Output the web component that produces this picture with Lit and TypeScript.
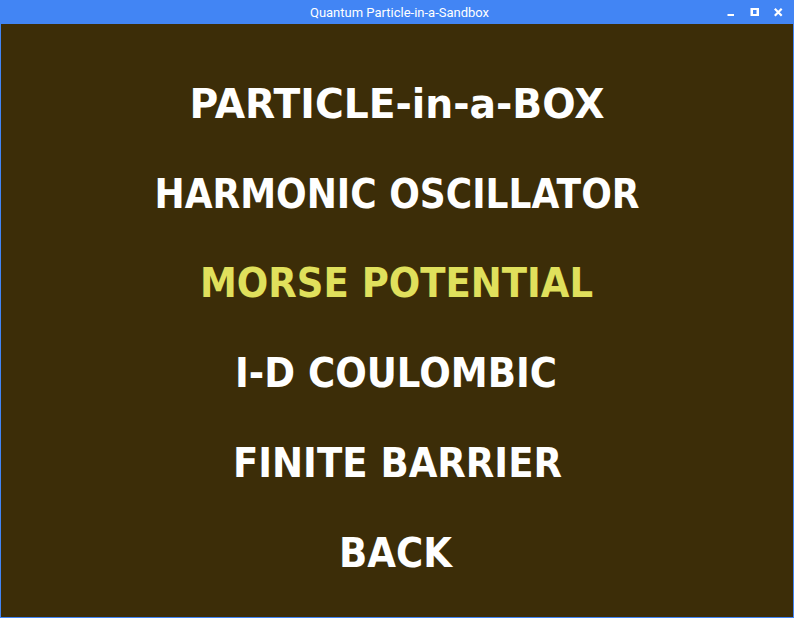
import { LitElement, html, css } from "lit";
import { customElement } from "lit/decorators.js";

const items: { label: string; width: number; dx: number; active?: boolean }[] = [
  { label: "PARTICLE-in-a-BOX", width: 415, dx: -0.5 },
  { label: "HARMONIC OSCILLATOR", width: 485, dx: -0.5 },
  { label: "MORSE POTENTIAL", width: 393, dx: -1, active: true },
  { label: "I-D COULOMBIC", width: 322, dx: -1 },
  { label: "FINITE BARRIER", width: 329, dx: 0 },
  { label: "BACK", width: 113, dx: -2 },
];

@customElement("app-root")
export class AppRoot extends LitElement {
  static styles = css`
    :host { display: block; width: 794px; height: 618px; overflow: hidden; }
    .window {
      width: 794px; height: 618px; box-sizing: border-box;
      display: flex; flex-direction: column;
      background: #4285f4;
      padding: 0 1px 1px 1px;
    }
    .bar {
      height: 24px; flex: none; display: grid;
      grid-template-columns: 1fr auto 1fr; align-items: center;
      margin: 0 -1px;
    }
    .title {
      grid-column: 2; color: #fff; font: 400 13px Roboto, sans-serif;
      transform: translateX(2.5px);
    }
    .controls {
      grid-column: 3; justify-self: end; display: flex; align-items: center;
      gap: 9px; padding-right: 9px;
    }
    .controls svg { display: block; width: 14px; height: 14px; }
    .content {
      flex: 1; background: #3c2d08; box-sizing: border-box; padding-top: 34px;
      display: flex; flex-direction: column;
    }
    .row { height: 89.8px; flex: none; display: flex; align-items: center; justify-content: center; }
    svg.label { display: block; overflow: visible; height: 46px; }
    svg.label text {
      font-family: "DejaVu Sans", sans-serif; font-weight: 700; font-size: 40px;
      fill: #fff;
    }
    svg.label.active text { fill: #e0e05c; }
  `;

  render() {
    return html`
      <div class="window">
        <div class="bar">
          <div class="title">Quantum Particle-in-a-Sandbox</div>
          <div class="controls">
            <svg viewBox="0 0 14 14"><rect x="2.5" y="9" width="6.5" height="2" fill="#fff" /></svg>
            <svg viewBox="0 0 14 14"><path fill="#fff" fill-rule="evenodd" d="M2.5 3H11v8H2.5z M5 5v4h3.5V5z" /></svg>
            <svg viewBox="0 0 14 14"><path stroke="#fff" stroke-width="2.2" d="M3.8 3.8l6.9 6.9M10.7 3.8l-6.9 6.9" /></svg>
          </div>
        </div>
        <div class="content">
          ${items.map(
            (i) => html`<div class="row">
              <svg class="label ${i.active ? "active" : ""}" style="width:${i.width}px" viewBox="0 0 ${i.width} 46">
                <text x="${i.dx}" y="37.5" textLength="${i.width}" lengthAdjust="spacingAndGlyphs">${i.label}</text>
              </svg>
            </div>`
          )}
        </div>
      </div>
    `;
  }
}
